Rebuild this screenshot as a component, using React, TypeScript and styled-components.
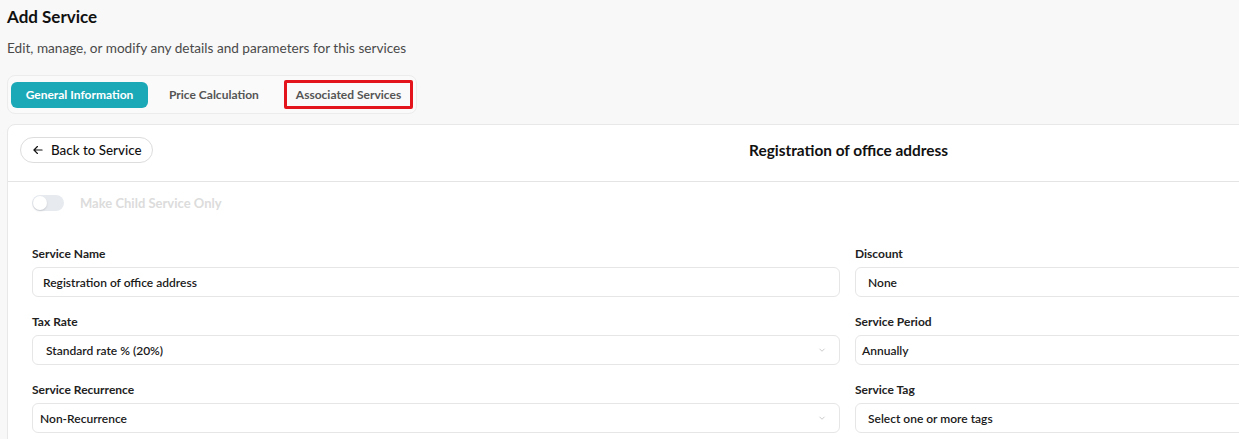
import React from "react";
import styled, { createGlobalStyle } from "styled-components";

const GlobalStyle = createGlobalStyle`
  html, body {
    margin: 0;
    padding: 0;
    background: #f8f8f8;
    overflow: hidden;
    font-family: "Lato", "Open Sans", sans-serif;
    color: #1d1d1f;
  }
`;

const Page = styled.div`
  width: 1239px;
  height: 439px;
  overflow: hidden;
  padding: 6px 7px 0;
  box-sizing: border-box;
`;

const Title = styled.h1`
  font-size: 17px;
  font-weight: 700;
  margin: 0;
  line-height: 22px;
  color: #111;
`;

const Subtitle = styled.p`
  font-size: 13.6px;
  margin: 12px 0 0;
  line-height: 16px;
  color: #4a4a4a;
`;

const Tabs = styled.div`
  display: inline-flex;
  align-items: center;
  gap: 6px;
  margin-top: 19px;
  padding: 4px 3px;
  border: 1px solid #ececec;
  border-radius: 8px;
  background: #fafafa;
`;

const Tab = styled.button<{ $active?: boolean; $marked?: boolean }>`
  font-family: inherit;
  font-size: 12px;
  font-weight: 700;
  padding: 0 ${(p) => (p.$marked ? "9px" : p.$active ? "12px" : "15px")};
  cursor: pointer;
  background: ${(p) => (p.$active ? "#1ba8b7" : "transparent")};
  color: ${(p) => (p.$active ? "#fff" : "#555")};
  border: ${(p) => (p.$marked ? "3px solid #e3141b" : "none")};
  border-radius: ${(p) => (p.$marked ? "2px" : "6px")};
  height: ${(p) => (p.$marked ? "29px" : "26px")};
  min-width: ${(p) => (p.$active ? "137px" : "auto")};
  margin-left: ${(p) => (p.$marked ? "4px" : "0")};
`;

const Card = styled.div`
  margin-top: 10px;
  background: #fff;
  border: 1px solid #e8e8e8;
  border-radius: 8px 8px 0 0;
  width: 1681px;
  min-height: 320px;
`;

const CardHeader = styled.div`
  display: grid;
  grid-template-columns: 1fr auto 1fr;
  align-items: center;
  height: 56px;
  padding: 0 12px;
  border-bottom: 1px solid #e4e4e4;
`;

const BackButton = styled.button`
  justify-self: start;
  display: flex;
  align-items: center;
  gap: 6px;
  height: 26px;
  margin-top: -7px;
  padding: 0 10px;
  font-family: inherit;
  font-size: 13.4px;
  font-weight: 500;
  color: #111;
  background: #fff;
  border: 1px solid #ddd;
  border-radius: 14px;
  cursor: pointer;
`;

const HeaderTitle = styled.h2`
  margin: -6px 0 0;
  font-size: 15.4px;
  font-weight: 700;
  color: #111;
`;

const Body = styled.div`
  padding: 13px 24px 0;
`;

const ToggleRow = styled.div`
  display: flex;
  align-items: center;
  gap: 16px;
  height: 16px;
`;

const Switch = styled.div`
  position: relative;
  width: 32px;
  height: 16px;
  border-radius: 8px;
  background: #e7ebf0;
`;

const Knob = styled.div`
  position: absolute;
  left: 1px;
  top: 1px;
  width: 14px;
  height: 14px;
  border-radius: 50%;
  background: #fff;
  box-shadow: 0 1px 2px rgba(0, 0, 0, 0.15);
`;

const ToggleLabel = styled.span`
  font-size: 13px;
  font-weight: 700;
  color: #dcdcdc;
`;

const FieldGrid = styled.div`
  display: grid;
  grid-template-columns: 808px 808px;
  column-gap: 15px;
  row-gap: 18px;
  margin-top: 36px;
`;

const Field = styled.div`
  display: flex;
  flex-direction: column;
  gap: 6px;
`;

const Label = styled.label`
  font-size: 12px;
  font-weight: 700;
  color: #222;
  line-height: 14px;
`;

const Box = styled.div<{ $indent?: number }>`
  display: flex;
  align-items: center;
  justify-content: space-between;
  height: 30px;
  box-sizing: border-box;
  padding: 0 12px 0 ${(p) => p.$indent ?? 10}px;
  border: 1px solid #e6e6e6;
  border-radius: 6px;
  font-size: 12px;
  font-weight: 600;
  color: #1a1a1a;
  background: #fff;
`;

const Chevron = () => (
  <svg width="10" height="10" viewBox="0 0 24 24" fill="none" stroke="#b0b0b0" strokeWidth="1.6">
    <path d="M6 9l6 6 6-6" />
  </svg>
);

const ArrowLeft = () => (
  <svg width="14" height="14" viewBox="0 0 24 24" fill="none" stroke="#111" strokeWidth="2" strokeLinecap="round" strokeLinejoin="round">
    <path d="M19 12H5M11 18l-6-6 6-6" />
  </svg>
);

const App: React.FC = () => {
  return (
    <>
      <GlobalStyle />
      <Page>
        <Title>Add Service</Title>
        <Subtitle>Edit, manage, or modify any details and parameters for this services</Subtitle>
        <Tabs>
          <Tab $active>General Information</Tab>
          <Tab>Price Calculation</Tab>
          <Tab $marked>Associated Services</Tab>
        </Tabs>
        <Card>
          <CardHeader>
            <BackButton>
              <ArrowLeft />
              Back to Service
            </BackButton>
            <HeaderTitle>Registration of office address</HeaderTitle>
            <div />
          </CardHeader>
          <Body>
            <ToggleRow>
              <Switch>
                <Knob />
              </Switch>
              <ToggleLabel>Make Child Service Only</ToggleLabel>
            </ToggleRow>
            <FieldGrid>
              <Field>
                <Label>Service Name</Label>
                <Box>Registration of office address</Box>
              </Field>
              <Field>
                <Label>Discount</Label>
                <Box $indent={12}>None</Box>
              </Field>
              <Field>
                <Label>Tax Rate</Label>
                <Box $indent={13}>
                  Standard rate % (20%)
                  <Chevron />
                </Box>
              </Field>
              <Field>
                <Label>Service Period</Label>
                <Box $indent={6}>Annually</Box>
              </Field>
              <Field>
                <Label>Service Recurrence</Label>
                <Box $indent={7}>
                  Non-Recurrence
                  <Chevron />
                </Box>
              </Field>
              <Field>
                <Label>Service Tag</Label>
                <Box $indent={12}>Select one or more tags</Box>
              </Field>
            </FieldGrid>
          </Body>
        </Card>
      </Page>
    </>
  );
};

export default App;
